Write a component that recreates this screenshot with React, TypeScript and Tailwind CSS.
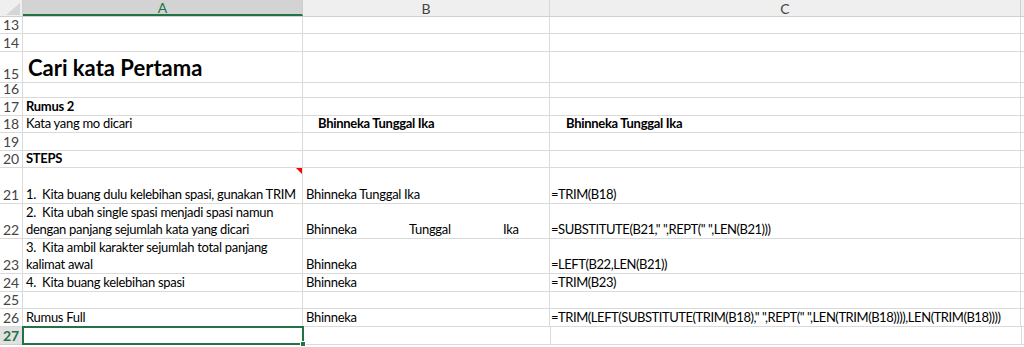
import React from "react";

type Row = {
  n: number;
  h: string;
  a?: React.ReactNode;
  b?: React.ReactNode;
  c?: React.ReactNode;
  sel?: boolean;
  comment?: boolean;
};

const rows: Row[] = [
  { n: 13, h: "h-[17px]" },
  { n: 14, h: "h-[18px]" },
  {
    n: 15,
    h: "h-[31px]",
    a: <span className="text-[22px] font-bold leading-[28px] pl-[2px] tracking-normal">Cari kata Pertama</span>,
  },
  { n: 16, h: "h-[15px]" },
  { n: 17, h: "h-[18px]", a: <span className="font-bold">Rumus 2</span> },
  {
    n: 18,
    h: "h-[17px]",
    a: "Kata yang mo dicari",
    b: <span className="font-bold pl-[12px]">Bhinneka Tunggal Ika</span>,
    c: <span className="font-bold pl-[15px] tracking-[-0.3px]">Bhinneka Tunggal Ika</span>,
  },
  { n: 19, h: "h-[18px]" },
  { n: 20, h: "h-[17px]", a: <span className="font-bold">STEPS</span> },
  {
    n: 21,
    h: "h-[36px]",
    a: "1.  Kita buang dulu kelebihan spasi, gunakan TRIM",
    b: "Bhinneka Tunggal Ika",
    c: "=TRIM(B18)",
    comment: true,
  },
  {
    n: 22,
    h: "h-[35px]",
    a: (
      <span>
        2.  Kita ubah single spasi menjadi spasi namun
        <br />
        dengan panjang sejumlah kata yang dicari
      </span>
    ),
    b: (
      <span className="flex">
        <span className="w-[103px]">Bhinneka</span>
        <span className="w-[94px]">Tunggal</span>
        <span>Ika</span>
      </span>
    ),
    c: '=SUBSTITUTE(B21," ",REPT(" ",LEN(B21)))',
  },
  {
    n: 23,
    h: "h-[35px]",
    a: (
      <span>
        3.  Kita ambil karakter sejumlah total panjang
        <br />
        kalimat awal
      </span>
    ),
    b: "Bhinneka",
    c: "=LEFT(B22,LEN(B21))",
  },
  { n: 24, h: "h-[18px]", a: "4.  Kita buang kelebihan spasi", b: "Bhinneka", c: "=TRIM(B23)" },
  { n: 25, h: "h-[17px]" },
  {
    n: 26,
    h: "h-[18px]",
    a: "Rumus Full",
    b: "Bhinneka",
    c: '=TRIM(LEFT(SUBSTITUTE(TRIM(B18)," ",REPT(" ",LEN(TRIM(B18)))),LEN(TRIM(B18))))',
  },
  { n: 27, h: "h-[18px]", sel: true },
];

export default function App() {
  return (
    <div className="w-[1024px] h-[347px] overflow-hidden bg-white font-['Lato','Liberation_Sans',sans-serif] text-[13px] text-black leading-[17px]">
      {/* header */}
      <div className="flex h-[17px] bg-[#efefef] border-b border-[#cfcfcf]">
        <div className="w-[23px] shrink-0 border-r border-[#cfcfcf] relative">
          <svg className="absolute left-[6px] top-[3px]" width="14" height="12" viewBox="0 0 14 12">
            <polygon points="14,0 14,12 0,12" fill="#d6d6d6" />
          </svg>
        </div>
        <div className="w-[280px] shrink-0 bg-[#d3d3d3] border-r border-[#cfcfcf] border-b-2 border-b-[#217346] flex items-center justify-center text-[#217346] text-[14px]">
          A
        </div>
        <div className="w-[247px] shrink-0 border-r border-[#d8d8d8] flex items-center justify-center text-[#444] text-[14px]">
          B
        </div>
        <div className="w-[471px] shrink-0 border-r border-[#cfcfcf] flex items-center justify-center text-[#444] text-[14px]">
          C
        </div>
        <div className="flex-1" />
      </div>
      {rows.map((r) => (
        <div key={r.n} className={`flex ${r.h}`}>
          <div
            className={`w-[23px] shrink-0 border-r border-b flex items-end justify-center text-[14px] leading-[16px] ${
              r.sel
                ? "bg-[#e1e1e1] text-[#217346] font-bold border-r-[#217346] border-b-[#cfcfcf]"
                : "bg-white text-[#444] border-[#dadada]"
            }`}
          >
            {r.n}
          </div>
          <div
            className={`w-[280px] shrink-0 flex items-end pl-[3px] whitespace-pre relative tracking-[-0.3px] ${
              r.sel
                ? "border-2 border-[#217346] -ml-[1px] w-[282px] -mt-[1px] h-[19px]"
                : "border-r border-b border-[#dadada]"
            }`}
          >
            {r.a}
            {r.comment && (
              <svg className="absolute right-0 top-0" width="6" height="6" viewBox="0 0 6 6">
                <polygon points="0,0 6,0 6,6" fill="#ff0000" />
              </svg>
            )}
            {r.sel && (
              <div className="absolute -right-[4px] -bottom-[4px] w-[6px] h-[6px] bg-[#217346] border border-white" />
            )}
          </div>
          <div className="w-[247px] shrink-0 border-r border-b border-[#dadada] flex items-end pl-[3px] whitespace-pre tracking-[-0.3px]">
            {r.b}
          </div>
          <div className="w-[471px] shrink-0 border-r border-b border-[#dadada] flex items-end pl-[1px] whitespace-pre tracking-[-0.45px]">
            {r.c}
          </div>
          <div className="flex-1 border-b border-[#dadada]" />
        </div>
      ))}
    </div>
  );
}
